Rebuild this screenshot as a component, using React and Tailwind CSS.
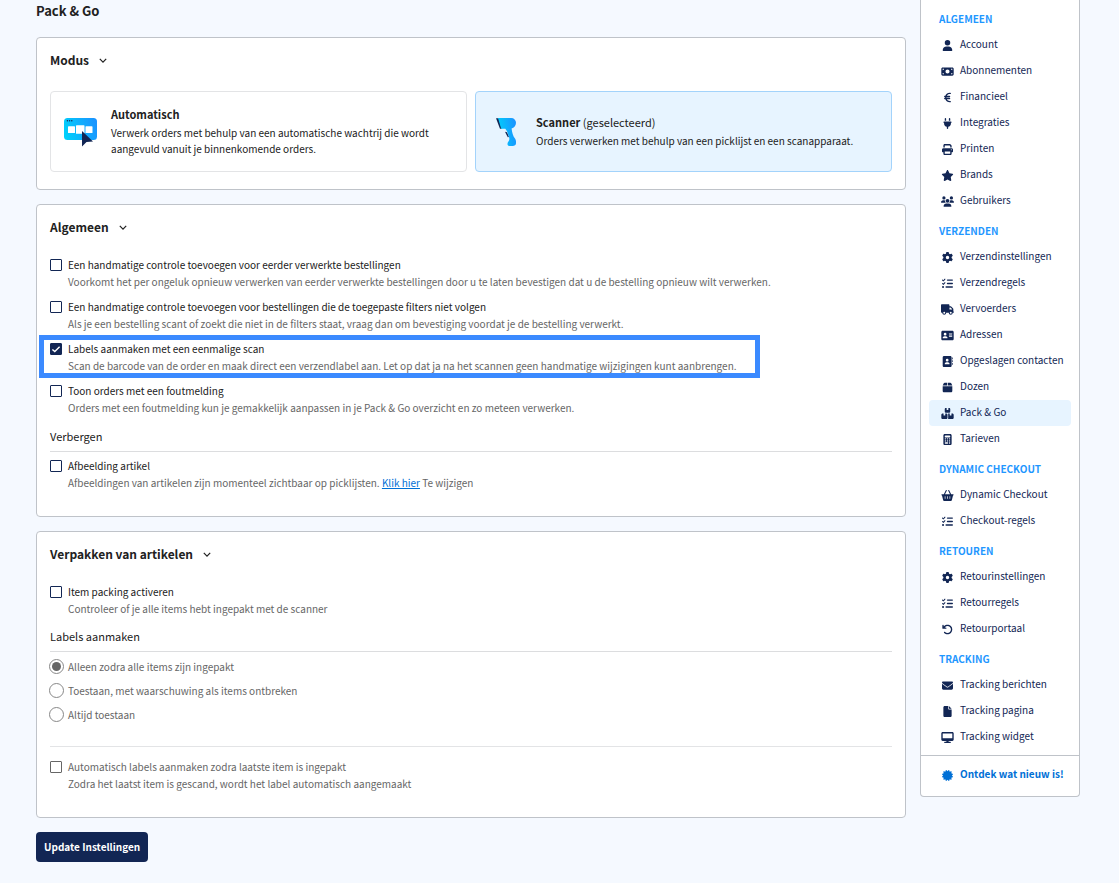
import { useState } from 'react'
import {
  FaAddressBook,
  FaAddressCard,
  FaArrowRotateLeft,
  FaBasketShopping,
  FaBox,
  FaBoxesStacked,
  FaCalculator,
  FaCertificate,
  FaDesktop,
  FaEnvelope,
  FaEuroSign,
  FaFile,
  FaGear,
  FaListCheck,
  FaMoneyBill,
  FaPlug,
  FaPrint,
  FaStar,
  FaTruck,
  FaUser,
  FaUsers,
} from 'react-icons/fa6'

const MENU = [
  {
    title: 'Algemeen',
    items: [
      { label: 'Account', icon: FaUser },
      { label: 'Abonnementen', icon: FaMoneyBill },
      { label: 'Financieel', icon: FaEuroSign },
      { label: 'Integraties', icon: FaPlug },
      { label: 'Printen', icon: FaPrint },
      { label: 'Brands', icon: FaStar },
      { label: 'Gebruikers', icon: FaUsers },
    ],
  },
  {
    title: 'Verzenden',
    items: [
      { label: 'Verzendinstellingen', icon: FaGear },
      { label: 'Verzendregels', icon: FaListCheck },
      { label: 'Vervoerders', icon: FaTruck },
      { label: 'Adressen', icon: FaAddressCard },
      { label: 'Opgeslagen contacten', icon: FaAddressBook },
      { label: 'Dozen', icon: FaBox },
      { label: 'Pack & Go', icon: FaBoxesStacked, active: true },
      { label: 'Tarieven', icon: FaCalculator },
    ],
  },
  {
    title: 'Dynamic Checkout',
    items: [
      { label: 'Dynamic Checkout', icon: FaBasketShopping },
      { label: 'Checkout-regels', icon: FaListCheck },
    ],
  },
  {
    title: 'Retouren',
    items: [
      { label: 'Retourinstellingen', icon: FaGear },
      { label: 'Retourregels', icon: FaListCheck },
      { label: 'Retourportaal', icon: FaArrowRotateLeft },
    ],
  },
  {
    title: 'Tracking',
    items: [
      { label: 'Tracking berichten', icon: FaEnvelope },
      { label: 'Tracking pagina', icon: FaFile },
      { label: 'Tracking widget', icon: FaDesktop },
    ],
  },
]

const LABEL_OPTIONS = [
  'Alleen zodra alle items zijn ingepakt',
  'Toestaan, met waarschuwing als items ontbreken',
  'Altijd toestaan',
]

function AutomaticIcon() {
  return (
    <svg viewBox="0 0 34 30" className="h-[30px] w-[34px]" aria-hidden="true">
      <defs>
        <linearGradient id="auto-fill" x1="0" y1="0.6" x2="1" y2="0.4">
          <stop offset="0" stopColor="#00d0fb" />
          <stop offset="1" stopColor="#1a94ff" />
        </linearGradient>
      </defs>
      <rect x="0" y="1" width="33" height="22" rx="3.5" fill="url(#auto-fill)" />
      <g fill="#122654">
        <circle cx="3.4" cy="3.8" r="0.7" />
        <circle cx="5.6" cy="3.8" r="0.7" />
        <circle cx="7.8" cy="3.8" r="0.7" />
      </g>
      <rect x="4" y="9.3" width="7" height="6.7" rx="0.6" fill="#fff" />
      <rect x="12" y="8.3" width="8.5" height="8.5" rx="0.6" fill="#fff" />
      <rect x="21.5" y="9.3" width="7" height="6.7" rx="0.6" fill="#fff" />
      <path d="M18 14 L29 24.5 L22.5 25 L18 29.5 Z" fill="#122654" />
    </svg>
  )
}

function ScannerIcon() {
  return (
    <svg viewBox="0 0 34 30" className="h-[30px] w-[34px]" aria-hidden="true">
      <defs>
        <linearGradient id="scan-fill" x1="0" y1="0.6" x2="1" y2="0.4">
          <stop offset="0" stopColor="#00d0fb" />
          <stop offset="1" stopColor="#1a94ff" />
        </linearGradient>
      </defs>
      <path d="M7 1.2 H9.8 L12.8 11.8 H11 Z" fill="#122654" />
      <path d="M16 14.8 L18 15.2 L20 20 L18.8 20.3 Z" fill="#122654" />
      <path
        d="M9 1 H22.3 A4.7 4.7 0 0 1 27 5.7 C27 8.6 25 10.8 22.6 11.4 C23 15.6 24.2 19.3 26 21.6 C26.7 22.5 27 23.5 27 24.5 V26.3 C27 28 25.4 29 23.8 29 H20.2 C18.4 29 18.2 27 18.8 25.6 C19.5 24.2 20.8 23 20.2 20.8 L18 14.2 L16.3 11.8 H12.2 Z"
        fill="url(#scan-fill)"
      />
    </svg>
  )
}

function Chevron() {
  return (
    <svg viewBox="0 0 8 8" className="h-2 w-2" fill="none" stroke="currentColor" strokeWidth="1.2" aria-hidden="true">
      <path d="M0.8 2.8 L4 6.2 L7.2 2.8" />
    </svg>
  )
}

function Card({ title, children }) {
  const [open, setOpen] = useState(true)

  return (
    <section className="rounded border border-[#bfc3c9] bg-white px-[13px] pt-2.5 pb-[17px]">
      <h2 className="text-[12px] leading-6 font-bold">
        <button type="button" aria-expanded={open} onClick={() => setOpen(!open)} className="flex items-center gap-2.5">
          {title}
          <Chevron />
        </button>
      </h2>
      {open && children}
    </section>
  )
}

function ModeCard({ icon, title, note, selected, children }) {
  const look = selected ? 'border-[#a3d3fb] bg-[#e7f4ff]' : 'border-[#e3e4e6] bg-white'
  return (
    <button
      type="button"
      aria-pressed={selected}
      className={`flex min-h-[81px] flex-1 basis-0 items-center gap-[13px] rounded border px-[13px] text-left ${look}`}
    >
      {icon}
      <span className="min-w-0 flex-1 pb-1">
        <span className="block text-[11px] leading-[22px]">
          <strong className="font-bold">{title}</strong> {note}
        </span>
        <span className="block max-w-[325px] text-[10px] leading-4">{children}</span>
      </span>
    </button>
  )
}

function CheckRow({ id, label, checked, muted, highlighted, children }) {
  return (
    <div className="relative flex gap-1.5">
      <span className="mt-[3px] grid h-3 w-3 shrink-0">
        <input
          id={id}
          type="checkbox"
          defaultChecked={checked}
          disabled={muted}
          className="peer col-start-1 row-start-1 h-3 w-3 appearance-none rounded-[1px] border border-[#122654] bg-white checked:bg-[#122654] disabled:border-[#666]"
        />
        <svg
          viewBox="0 0 12 12"
          fill="none"
          stroke="#fff"
          strokeWidth="1.4"
          className="pointer-events-none invisible col-start-1 row-start-1 h-3 w-3 peer-checked:visible"
          aria-hidden="true"
        >
          <path d="M2.4 6.4 L4.8 8.6 L9.6 3.8" />
        </svg>
      </span>
      <div className="text-[10px] leading-[17px] text-[#666]">
        <label htmlFor={id} className={muted ? 'block' : 'block text-[#212121]'}>
          {label}
        </label>
        <p>{children}</p>
      </div>
      {highlighted && (
        <span className="pointer-events-none absolute -top-[5px] -left-[11px] h-[43px] w-[721px] border-[5px] border-[#3b8aff]" />
      )}
    </div>
  )
}

function Sidebar() {
  return (
    <nav className="w-40 shrink-0 rounded-b border border-t-0 border-[#bfc3c9] bg-white text-[10px] text-[#122654]">
      <div className="px-2 pt-0.5 pb-[5px]">
        {MENU.map((group) => (
          <div key={group.title}>
            <h3 className="px-2.5 pt-1.5 pb-0.5 leading-[22px] font-bold text-[#1f97ff] uppercase">{group.title}</h3>
            <ul>
              {group.items.map(({ label, icon: Icon, active }) => (
                <li key={label}>
                  <a
                    href="#"
                    aria-current={active ? 'page' : undefined}
                    className={`flex h-[26px] items-center gap-1.5 rounded px-3 whitespace-nowrap ${active ? 'bg-[#e7f4ff]' : ''}`}
                  >
                    <Icon className="h-[11px] w-[13px] shrink-0" />
                    <span className="pb-[3px]">{label}</span>
                  </a>
                </li>
              ))}
            </ul>
          </div>
        ))}
      </div>
      <div className="border-t border-[#bfc3c9] px-2 pt-1.5 pb-2">
        <a href="#" className="flex h-[26px] items-center gap-1.5 pl-3 font-bold whitespace-nowrap text-[#0070d6]">
          <FaCertificate className="h-[11px] w-[13px] shrink-0" />
          <span className="pb-[3px]">Ontdek wat nieuw is!</span>
        </a>
      </div>
    </nav>
  )
}

export default function App() {
  return (
    <div className="flex min-h-screen items-start gap-3.5 bg-[#f5f9ff] pr-[39px] pl-9 font-['Noto_Sans_CJK_SC',sans-serif] text-[#212121]">
      <main className="min-w-0 flex-1 pb-5">
        <h1 className="pb-[15px] text-[13px] leading-[22px] font-bold">Pack &amp; Go</h1>

        <form className="flex flex-col gap-3.5" onSubmit={(e) => e.preventDefault()}>
          <Card title="Modus">
            <div className="mt-[19px] flex gap-2">
              <ModeCard icon={<AutomaticIcon />} title="Automatisch">
                Verwerk orders met behulp van een automatische wachtrij die wordt aangevuld vanuit je binnenkomende
                orders.
              </ModeCard>
              <ModeCard icon={<ScannerIcon />} title="Scanner" note="(geselecteerd)" selected>
                Orders verwerken met behulp van een picklijst en een scanapparaat.
              </ModeCard>
            </div>
          </Card>

          <Card title="Algemeen">
            <div className="mt-[17px] flex flex-col gap-2">
              <CheckRow id="check-processed" label="Een handmatige controle toevoegen voor eerder verwerkte bestellingen">
                Voorkomt het per ongeluk opnieuw verwerken van eerder verwerkte bestellingen door u te laten bevestigen
                dat u de bestelling opnieuw wilt verwerken.
              </CheckRow>
              <CheckRow
                id="check-filters"
                label="Een handmatige controle toevoegen voor bestellingen die de toegepaste filters niet volgen"
              >
                Als je een bestelling scant of zoekt die niet in de filters staat, vraag dan om bevestiging voordat je de
                bestelling verwerkt.
              </CheckRow>
              <CheckRow id="single-scan" label="Labels aanmaken met een eenmalige scan" checked highlighted>
                Scan de barcode van de order en maak direct een verzendlabel aan. Let op dat ja na het scannen geen
                handmatige wijzigingen kunt aanbrengen.
              </CheckRow>
              <CheckRow id="show-errors" label="Toon orders met een foutmelding">
                Orders met een foutmelding kun je gemakkelijk aanpassen in je Pack &amp; Go overzicht en zo meteen
                verwerken.
              </CheckRow>
            </div>
            <h3 className="mt-2 mb-[5px] border-b border-[#dcdddf] pb-[3px] text-[11px] leading-6">Verbergen</h3>
            <div className="pb-2">
              <CheckRow id="hide-image" label="Afbeelding artikel">
                Afbeeldingen van artikelen zijn momenteel zichtbaar op picklijsten.{' '}
                <a href="#" className="text-[#0070d6] underline">
                  Klik hier
                </a>{' '}
                Te wijzigen
              </CheckRow>
            </div>
          </Card>

          <Card title="Verpakken van artikelen">
            <div className="mt-[17px]">
              <CheckRow id="item-packing" label="Item packing activeren">
                Controleer of je alle items hebt ingepakt met de scanner
              </CheckRow>
            </div>
            <fieldset className="mt-[7px]">
              <legend className="mb-0.5 w-full border-b border-[#dcdddf] pb-[3px] text-[11px] leading-6">
                Labels aanmaken
              </legend>
              {LABEL_OPTIONS.map((option, i) => (
                <label key={option} className="flex h-6 items-center gap-1 text-[10px] text-[#666]">
                  <input
                    type="radio"
                    name="label-moment"
                    defaultChecked={i === 0}
                    className="-ml-px h-[15px] w-[15px] appearance-none rounded-full border border-[#888] bg-white bg-clip-content p-[2px] checked:bg-[#666]"
                  />
                  {option}
                </label>
              ))}
            </fieldset>
            <div className="mt-5 border-t border-[#e3e4e6] pt-[11px] pb-2">
              <CheckRow id="auto-labels" label="Automatisch labels aanmaken zodra laatste item is ingepakt" muted>
                Zodra het laatst item is gescand, wordt het label automatisch aangemaakt
              </CheckRow>
            </div>
          </Card>

          <button
            type="submit"
            className="h-[30px] self-start rounded bg-[#122654] px-2 pb-0.5 text-[10px] font-bold text-white"
          >
            Update Instellingen
          </button>
        </form>
      </main>

      <Sidebar />
    </div>
  )
}
